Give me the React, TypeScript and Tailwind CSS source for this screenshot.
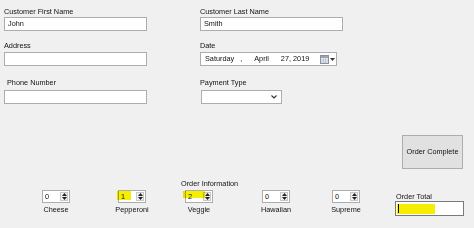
import React from "react";

function TextBox({ value, className = "" }: { value?: string; className?: string }) {
  return (
    <div className={`flex h-[14px] items-center border border-[#abadb3] bg-white pl-[3px] ${className}`}>
      {value}
    </div>
  );
}

function Field({ label, children, labelClass = "", gap = "mt-[1px]" }: { label: string; children: React.ReactNode; labelClass?: string; gap?: string }) {
  return (
    <div className="flex flex-col">
      <span className={`leading-[9px] ${labelClass}`}>{label}</span>
      <div className={gap}>{children}</div>
    </div>
  );
}

function Spinner({ value, mark }: { value: string; mark?: string }) {
  return (
    <div className="relative flex h-[13px] w-[28px] border border-[#abadb3] bg-white">
      <div className="flex-1 pl-[2px] leading-[11px]">{value}</div>
      <div className="my-[1px] mr-[1px] flex w-[8px] flex-col items-center justify-center gap-[1px] border border-[#c8c8c8] bg-[#f0f0f0]">
        <svg width="5" height="3" viewBox="0 0 5 3">
          <path d="M2.5 0 L5 3 L0 3 Z" fill="#222" />
        </svg>
        <svg width="5" height="3" viewBox="0 0 5 3">
          <path d="M0 0 L5 0 L2.5 3 Z" fill="#222" />
        </svg>
      </div>
      {mark && <span className={`pointer-events-none absolute bg-[#f5ee00] mix-blend-multiply ${mark}`} />}
    </div>
  );
}

function Pizza({ label, value, mark, className = "", top }: { label: string; value: string; mark?: string; className?: string; top?: React.ReactNode }) {
  return (
    <div className={`flex w-[50px] shrink-0 flex-col items-center ${className}`}>
      {top}
      <Spinner value={value} mark={mark} />
      <span className="mt-[2px] leading-[9px]">{label}</span>
    </div>
  );
}

export default function App() {
  return (
    <div
      className="flex h-[228px] w-[474px] flex-col overflow-hidden bg-[#f0f0f0] text-[7.3px] text-[#111]"
      style={{ fontFamily: '"Liberation Sans", Arial, sans-serif' }}
    >
      {/* customer fields */}
      <div className="grid grid-cols-[143px_143px] gap-x-[53px] pl-[4px] pt-[7px]">
        <Field label="Customer First Name">
          <TextBox value="John" />
        </Field>
        <Field label="Customer Last Name">
          <TextBox value="Smith" />
        </Field>

        <div className="mt-[10px]">
          <Field label="Address" gap="mt-[2px]">
            <TextBox />
          </Field>
        </div>
        <div className="mt-[10px]">
          <Field label="Date" gap="mt-[2px]">
            <div className="flex h-[14px] w-[137px] items-center whitespace-nowrap border border-[#abadb3] bg-white pl-[4px]">
              <span>Saturday</span>
              <span className="ml-[6px]">,</span>
              <span className="ml-[12px]">April</span>
              <span className="ml-[12px]">27, 2019</span>
              <svg className="ml-[11px] shrink-0" width="9" height="9" viewBox="0 0 9 9">
                <rect x="0.5" y="0.5" width="8" height="8" fill="#e8ecf2" stroke="#8a8f99" />
                <rect x="1" y="1" width="7" height="2" fill="#9aa4b4" />
                <path d="M1 5 H8 M1 7 H8 M3.5 3 V8 M5.5 3 V8" stroke="#b4bac4" strokeWidth="0.6" />
              </svg>
              <svg className="ml-[1px] shrink-0" width="5" height="3" viewBox="0 0 5 3">
                <path d="M0 0 L5 0 L2.5 3 Z" fill="#333" />
              </svg>
            </div>
          </Field>
        </div>

        <div className="mt-[12px]">
          <Field label="Phone Number" labelClass="pl-[3px]" gap="mt-[3px]">
            <TextBox className="h-[13px]" />
          </Field>
        </div>
        <div className="mt-[12px]">
          <Field label="Payment Type" gap="mt-[3px]">
            <div className="ml-[1px] flex h-[14px] w-[81px] items-center justify-end border border-[#abadb3] bg-white pr-[4px]">
              <svg width="6" height="4" viewBox="0 0 6 4">
                <path d="M0.5 0.5 L3 3 L5.5 0.5" fill="none" stroke="#333" strokeWidth="1.1" />
              </svg>
            </div>
          </Field>
        </div>
      </div>

      {/* order button */}
      <div className="mt-[31px] flex justify-end pr-[11px]">
        <button className="flex h-[34px] w-[61px] items-center justify-center border border-[#adadad] bg-[#e1e1e1] text-[7.3px] text-[#111]">
          Order Complete
        </button>
      </div>

      {/* pizzas */}
      <div className="mt-[10px] flex items-end">
        <Pizza label="Cheese" value="0" className="ml-[31px]" />
        <Pizza label="Pepperoni" value="1" className="ml-[26px]" mark="-left-[2px] top-0 h-[9px] w-[14px]" />
        <Pizza
          label="Veggie"
          value="2"
          className="ml-[17px]"
          mark="-left-[3px] top-0 h-[7px] w-[22px]"
          top={<span className="mb-[2px] self-start whitespace-nowrap pl-[7px] leading-[9px]">Order Information</span>}
        />
        <Pizza label="Hawaiian" value="0" className="ml-[27px]" />
        <Pizza label="Supreme" value="0" className="ml-[20px]" />
        <div className="-mb-[2px] ml-[24px] flex flex-col">
          <span className="pl-[1px] leading-[9px]">Order Total</span>
          <div className="relative h-[15px] w-[69px] border border-[#7a7a7a] bg-white">
            <span className="absolute left-[2px] top-[2px] h-[9px] w-[1px] bg-[#111]" />
            <span className="pointer-events-none absolute left-[1px] top-[2px] h-[10px] w-[38px] bg-[#f5ee00] mix-blend-multiply" />
          </div>
        </div>
      </div>
    </div>
  );
}
